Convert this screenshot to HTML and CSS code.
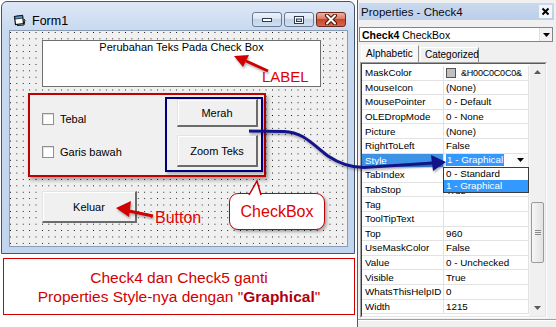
FILE: index.html
```html
<!DOCTYPE html>
<html>
<head>
<meta charset="utf-8">
<title>Form1 - Properties</title>
<link rel="stylesheet" href="styles.css">
</head>
<body>
<div class="page">
  <div class="left">
    <div class="window">
      <div class="titlebar">
        <svg class="appicon" width="13" height="12" viewBox="0 0 13 12">
          <path d="M1.5 2.5 L9.5 1.5 L10.5 9.5 L2.5 10.5 Z" fill="#fff" stroke="#111" stroke-width="1.2"/>
          <path d="M1.7 2.5 L9.5 1.5 L9.8 4 L2 5 Z" fill="#4aa8e8" stroke="#111" stroke-width="0.8"/>
          <path d="M10.5 5 L12 6 L11 11 L4 11.5" fill="none" stroke="#111" stroke-width="1"/>
        </svg>
        <span class="title">Form1</span>
        <div class="caption">
          <span class="cbtn"><svg width="12" height="7" viewBox="0 0 12 7"><rect x="1.5" y="2.5" width="9" height="3" fill="#fff" stroke="#2c3a4c" stroke-width="1"/></svg></span>
          <span class="cbtn"><svg width="12" height="10" viewBox="0 0 12 10"><rect x="1.5" y="1.5" width="9" height="7" fill="#fff" stroke="#2c3a4c" stroke-width="1"/><rect x="3.5" y="4" width="5" height="2.5" fill="#c9d8ec" stroke="#2c3a4c" stroke-width="1"/></svg></span>
          <span class="cbtn close"><svg width="14" height="11" viewBox="0 0 14 11"><path d="M3 1.5 L11 9.5 M11 1.5 L3 9.5" stroke="#4a1208" stroke-width="4" stroke-linecap="round"/><path d="M3 1.5 L11 9.5 M11 1.5 L3 9.5" stroke="#fff" stroke-width="2" stroke-linecap="round"/></svg></span>
        </div>
      </div>
      <div class="client">
        <div class="label">Perubahan Teks Pada Check Box</div>
        <div class="frame-red">
          <div class="checks">
            <div class="chk"><span class="box"></span><span>Tebal</span></div>
            <div class="chk"><span class="box"></span><span>Garis bawah</span></div>
          </div>
          <div class="frame-blue">
            <div class="btn merah">Merah</div>
            <div class="btn zoom">Zoom Teks</div>
          </div>
        </div>
        <div class="btn keluar">Keluar</div>
      </div>
    </div>
    <div class="note">
      <div>Check4 dan Check5 ganti</div>
      <div>Properties Style-nya dengan "<b>Graphical</b>"</div>
    </div>
  </div>

  <div class="props">
    <div class="ptitle"><span>Properties - Check4</span><span class="pclose"><svg width="9" height="9" viewBox="0 0 9 9"><path d="M1.5 1.5 L7.5 7.5 M7.5 1.5 L1.5 7.5" stroke="#000" stroke-width="2"/></svg></span></div>
    <div class="combo"><span><b>Check4</b> CheckBox</span><span class="cdd"><svg width="7" height="4" viewBox="0 0 7 4"><path d="M0 0 H7 L3.5 4 Z" fill="#000"/></svg></span></div>
    <div class="tabs">
      <div class="tab on">Alphabetic</div>
      <div class="tab">Categorized</div>
    </div>
    <div class="grid">
      <div class="grid-in">
        <div class="rows">
          <div class="row"><div class="n">MaskColor</div><div class="v"><span class="swatch"></span><span class="mc">&amp;H00C0C0C0&amp;</span></div></div>
          <div class="row"><div class="n">MouseIcon</div><div class="v">(None)</div></div>
          <div class="row"><div class="n">MousePointer</div><div class="v">0 - Default</div></div>
          <div class="row"><div class="n">OLEDropMode</div><div class="v">0 - None</div></div>
          <div class="row"><div class="n">Picture</div><div class="v">(None)</div></div>
          <div class="row"><div class="n">RightToLeft</div><div class="v">False</div></div>
          <div class="row sel"><div class="n">Style</div><div class="v edit"><span class="hl">1 - Graphical</span><span class="ddbtn"><svg width="7" height="4" viewBox="0 0 7 4"><path d="M0 0 H7 L3.5 4 Z" fill="#000"/></svg></span>
            <div class="list"><div class="item">0 - Standard</div><div class="item on">1 - Graphical</div></div>
          </div></div>
          <div class="row"><div class="n">TabIndex</div><div class="v"></div></div>
          <div class="row"><div class="n">TabStop</div><div class="v low">True</div></div>
          <div class="row"><div class="n">Tag</div><div class="v"></div></div>
          <div class="row"><div class="n">ToolTipText</div><div class="v"></div></div>
          <div class="row"><div class="n">Top</div><div class="v">960</div></div>
          <div class="row"><div class="n">UseMaskColor</div><div class="v">False</div></div>
          <div class="row"><div class="n">Value</div><div class="v">0 - Unchecked</div></div>
          <div class="row"><div class="n">Visible</div><div class="v">True</div></div>
          <div class="row"><div class="n">WhatsThisHelpID</div><div class="v">0</div></div>
          <div class="row"><div class="n">Width</div><div class="v">1215</div></div>
        </div>
        <div class="sb">
          <div class="arr"><svg width="7" height="4" viewBox="0 0 7 4"><path d="M0 4 H7 L3.5 0 Z" fill="#5a5a5a"/></svg></div>
          <div class="sp1"></div>
          <div class="thumb"><svg width="6" height="6" viewBox="0 0 6 6"><path d="M0 0.5 H6 M0 2.5 H6 M0 4.5 H6" stroke="#8a8a8a" stroke-width="1"/></svg></div>
          <div class="sp2"></div>
          <div class="arr"><svg width="7" height="4" viewBox="0 0 7 4"><path d="M0 0 H7 L3.5 4 Z" fill="#5a5a5a"/></svg></div>
        </div>
      </div>
    </div>
    <div class="desc"></div>
  </div>

  <div class="ann ann-label">LABEL</div>
  <div class="ann ann-button">Button</div>
  <div class="callout">CheckBox</div>

  <svg class="overlay" width="556" height="327" viewBox="0 0 556 327">
    <g class="shadowed">
      <path d="M249 131 L284 131.5 C304 132 314 146 328 156 C340 164 350 167.5 364 167.5 L433 163" fill="none" stroke="#14148a" stroke-width="3"/>
      <path d="M446 162 L431 155 L433 171 Z" fill="#14148a"/>
      <path d="M268 71 L246 61" stroke="#d00000" stroke-width="3" fill="none"/>
      <path d="M234 56 L249 55 L243 67 Z" fill="#d00000"/>
      <path d="M153 216 L129 211" stroke="#d00000" stroke-width="3" fill="none"/>
      <path d="M116 208 L131 201 L129 217 Z" fill="#d00000"/>
    </g>
    <path d="M249 195 L257 181 L261 195" fill="#fff" stroke="#c00000" stroke-width="1.5"/>
  </svg>
</div>
</body>
</html>
```

FILE: styles.css
```css
* { box-sizing: border-box; margin: 0; padding: 0; }
body { margin: 0; background: #fff; font-family: "Liberation Sans", Arial, sans-serif; color: #000; }

.page { position: relative; width: 556px; height: 327px; display: flex; overflow: hidden; background: #fff; }

/* ---------- left column ---------- */
.left { width: 357px; display: flex; flex-direction: column; padding: 1px 0 0 1px; }

.window {
  width: 354px; height: 253px;
  border: 1px solid #46536a; border-radius: 6px 6px 0 0;
  background: linear-gradient(#dde8f6, #c8daf0 28px, #c2d5ee);
  padding: 0 6px 6px 7px;
  display: flex; flex-direction: column;
}
.titlebar { height: 28px; flex-shrink: 0; display: flex; align-items: flex-start; }
.appicon { margin: 12px 0 0 4px; }
.title { margin: 12px 0 0 6px; font-size: 12.5px; line-height: 15px; color: #000; }
.caption { margin: 10px 2px 0 auto; display: flex; gap: 2px; }
.cbtn {
  width: 30px; height: 15px; border: 1px solid #6a7b93; border-radius: 3px;
  background: linear-gradient(#eef3fa, #dbe6f3 45%, #c2d3ea 50%, #d0e0f2);
  display: flex; align-items: center; justify-content: center;
}
.cbtn.close { background: linear-gradient(#eeb2a2, #dc7a62 45%, #c8452c 50%, #d8664c); border-color: #6b2a1c; }

.client {
  flex: 1; border: 1px solid #8a9bb3;
  background-color: #000;
  background-image:
    linear-gradient(90deg, transparent 1px, #f0f0f0 1px),
    linear-gradient(180deg, transparent 1px, #f0f0f0 1px);
  background-size: 6.4px 6.4px;
  background-position: 0 1px;
  display: flex; flex-direction: column; align-items: flex-start;
}

.label {
  margin: 9px 0 0 32px; width: 279px; height: 47px;
  background: #fff; border: 1px solid #6f6f6f;
  text-align: center; font-size: 11px; line-height: 12px;
}

.frame-red {
  margin: 6px 0 0 18px; width: 238px; height: 84px;
  border: 2px solid #c00000; background: #f0f0f0;
  display: flex;
  box-shadow: 2px 3px 4px rgba(0, 0, 0, 0.35);
}
.checks { width: 135px; padding: 18px 0 0 12px; display: flex; flex-direction: column; gap: 21px; }
.chk { display: flex; align-items: center; height: 12px; gap: 6px; font-size: 11px; }
.box { width: 12px; height: 12px; background: #fff; border: 1px solid #8e8f8f; box-shadow: inset 1px 1px 0 #e2e2e2; }

.frame-blue {
  margin-top: 2px; width: 98px; height: 75px;
  border: 2px solid #00007f;
  padding-left: 10px;
  display: flex; flex-direction: column; gap: 8px;
  box-shadow: 2px 2px 3px rgba(0, 0, 0, 0.3);
}

.btn {
  background: #f0f0f0;
  border-top: 1px solid #e4e4e4; border-left: 1px solid #e4e4e4;
  border-right: 2px solid #6b6b6b; border-bottom: 2px solid #6b6b6b;
  box-shadow: inset 1px 1px 0 #fff;
  display: flex; align-items: center; justify-content: center;
  font-size: 11px;
}
.merah { width: 81px; height: 28px; }
.zoom { width: 81px; height: 32px; }
.keluar { margin: 14px 0 0 32px; width: 95px; height: 32px; }

.note {
  margin: 4px 0 0 2px; width: 352px; height: 57px;
  border: 1px solid #d00000;
  display: flex; flex-direction: column; align-items: center; justify-content: center;
  color: #d40000; font-size: 15.5px; line-height: 19px;
}
.note b { color: #b0000c; }

/* ---------- properties ---------- */
.props {
  width: 199px; border-left: 1px solid #5a5a5a; background: #f0f0f0;
  display: flex; flex-direction: column; padding-top: 3px;
  font-family: "Liberation Sans", Arial, sans-serif;
}
.ptitle {
  height: 17px; margin: 0 2px 0 1px; padding-left: 2px;
  background: linear-gradient(#c9d9ee, #bccfe9);
  display: flex; align-items: center;
  font-size: 11.5px; color: #0a0a14;
}
.pclose { margin-left: auto; width: 13px; height: 13px; margin-right: 2px; background: #f4f6fa; display: flex; align-items: center; justify-content: center; }

.combo {
  margin: 7px 3px 0 1px; height: 15px;
  background: #fff; border: 1px solid #7f858e;
  display: flex; align-items: center; padding-left: 2px;
  font-size: 10.5px;
}
.cdd { margin-left: auto; width: 13px; height: 13px; display: flex; align-items: center; justify-content: center; background: #f2f2f2; border-left: 1px solid #e0e0e0; }

.tabs { margin-top: 3px; height: 17px; display: flex; align-items: flex-end; padding-left: 3px; }
.tab {
  height: 15px; padding: 0 4px;
  border-top: 1px solid #fff; border-left: 1px solid #fff; border-right: 1px solid #8e8e8e;
  font-size: 10px; line-height: 14px; display: flex; align-items: center;
}
.tab.on { height: 17px; width: 58px; background: #f7f7f7; }
.tab + .tab { width: 59px; margin-left: 1px; }

.grid {
  margin-left: 2px; width: 187px; height: 256px;
  border-top: 1px solid #a0a0a0; border-left: 1px solid #a0a0a0;
  border-right: 1px solid #fff; border-bottom: 1px solid #fff;
}
.grid-in {
  height: 100%; display: flex; background: #fff;
  border-top: 1px solid #5a5a5a; border-left: 1px solid #3a3a3a;
  border-right: 1px solid #e3e3e3; border-bottom: 1px solid #e3e3e3;
}
.rows { width: 167px; padding-top: 2px; display: flex; flex-direction: column; }
.row { height: 14.6px; flex-shrink: 0; display: flex; font-size: 9.8px; }
.n, .v { border-bottom: 1px solid #e2e2e2; border-right: 1px solid #e2e2e2; white-space: nowrap; display: flex; align-items: center; }
.n { width: 82px; padding-left: 3px; overflow: hidden; }
.v { width: 85px; padding-left: 2px; }
.v.low { align-items: flex-end; line-height: 11px; }
.sel .n { background: #3c93e6; color: #fff; }
.swatch { flex-shrink: 0; width: 10px; height: 10px; background: #c0c0c0; border: 1px solid #555; margin-right: 5px; }
.mc { font-size: 9px; letter-spacing: -0.2px; }

.edit { position: relative; padding-right: 0; }
.hl { background: #3399ff; color: #fff; padding: 0 1px; line-height: 12px; }
.ddbtn { margin-left: auto; width: 16px; height: 13px; display: flex; align-items: center; justify-content: center; background: #fafafa; }
.list {
  position: absolute; left: -1px; top: 100%; width: 86px; z-index: 5;
  background: #fff; border: 1px solid #3a3a3a;
}
.item { height: 12px; line-height: 12px; padding-left: 2px; font-size: 9.8px; color: #000; }
.item.on { background: #3399ff; color: #fff; }

.sb { width: 16px; background: #f0f0f0; display: flex; flex-direction: column; border-left: 1px solid #f8f8f8; }
.arr { height: 16px; flex-shrink: 0; display: flex; align-items: center; justify-content: center; }
.sp1 { height: 122px; flex-shrink: 0; }
.thumb {
  height: 61px; flex-shrink: 0; margin: 0 1px 0 1px;
  border: 1px solid #9a9a9a; border-radius: 2px;
  background: linear-gradient(90deg, #f6f6f6, #e2e2e2);
  display: flex; align-items: center; justify-content: center;
}
.sp2 { flex: 1; }

.desc { flex: 1; margin-top: 1px; border-top: 1px solid #a0a0a0; box-shadow: inset 0 1px 0 #fff; }

/* ---------- annotations (overlays) ---------- */
.ann { position: absolute; color: #e00000; line-height: 1; white-space: nowrap; }
.ann-label { left: 262px; top: 69px; font-size: 15px; }
.ann-button { left: 155px; top: 210px; font-size: 16px; }
.callout {
  position: absolute; left: 229px; top: 193px; width: 96px; height: 37px;
  border: 1.5px solid #c00000; border-radius: 9px; background: #fff;
  box-shadow: 2px 2px 3px rgba(0, 0, 0, 0.3);
  display: flex; align-items: center; justify-content: center;
  color: #e00000; font-size: 16px;
}
.overlay { position: absolute; left: 0; top: 0; pointer-events: none; }
.shadowed { filter: drop-shadow(1px 2px 1px rgba(0, 0, 0, 0.3)); }
```
